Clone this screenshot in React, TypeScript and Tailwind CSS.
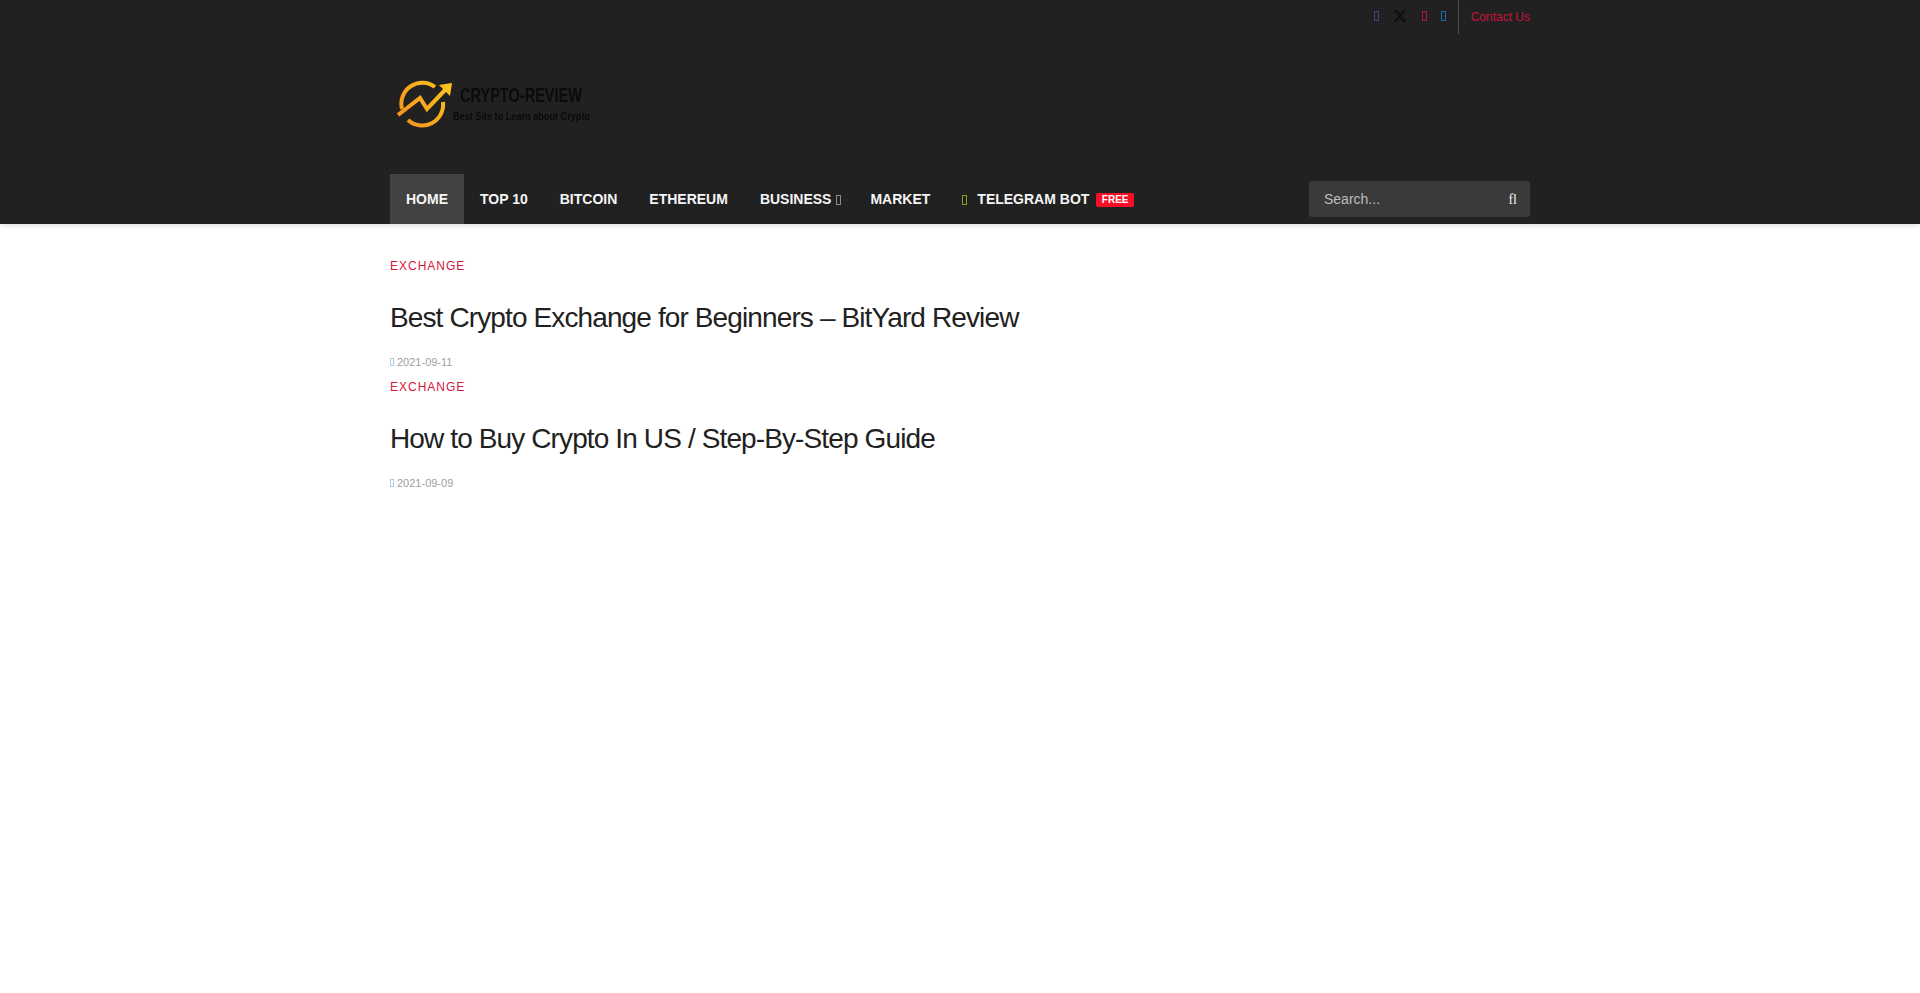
const navItems = ["TOP 10", "BITCOIN", "ETHEREUM"];

const posts = [
  { title: "Best Crypto Exchange for Beginners – BitYard Review", date: "2021-09-11" },
  { title: "How to Buy Crypto In US / Step-By-Step Guide", date: "2021-09-09" },
];

// icon font never loaded on the original page, so its icons show as empty boxes
function Tofu({ className }: { className: string }) {
  return <span className={`inline-block border ${className}`} />;
}

function Logo() {
  return (
    <svg width="270" height="52" viewBox="0 0 270 52" className="block blur-[0.5px]">
      <defs>
        <linearGradient id="logoGrad" gradientUnits="userSpaceOnUse" x1="8" y1="46" x2="60" y2="6">
          <stop offset="0" stopColor="#f5901e" />
          <stop offset="1" stopColor="#fbc41c" />
        </linearGradient>
      </defs>
      <path d="M12 31A21 21 0 0 1 45 9" fill="none" stroke="url(#logoGrad)" strokeWidth="4" />
      <path d="M53 24A21 21 0 0 1 18 42" fill="none" stroke="url(#logoGrad)" strokeWidth="4" />
      <path d="M8 37L30 20L37 31L56 11" fill="none" stroke="url(#logoGrad)" strokeWidth="4" />
      <path d="M49 7L62 5L60 18Z" fill="url(#logoGrad)" />
      <text x="70" y="24" textLength="122" lengthAdjust="spacingAndGlyphs" fontFamily="Liberation Sans" fontWeight="700" fontSize="21" fill="#0a0a0a">
        CRYPTO-REVIEW
      </text>
      <text x="63" y="42" textLength="137" lengthAdjust="spacingAndGlyphs" fontFamily="Liberation Sans" fontWeight="700" fontSize="10" fill="#0a0a0a">
        Best Site to Learn about Crypto
      </text>
    </svg>
  );
}

export default function App() {
  return (
    <div className="min-h-[993px] bg-white font-['Liberation_Sans',Arial,sans-serif]">
      <header className="bg-[#212121] shadow-[0_1px_6px_rgba(0,0,0,0.15)]">
        {/* Top bar */}
        <div className="mx-auto flex h-[34px] w-[1140px] items-center justify-end">
          <div className="mb-[2px] flex items-center">
            <Tofu className="h-[10px] w-[5px] border-[#3b4a78]" />
            <svg viewBox="0 0 24 24" className="ml-[14px] h-[14px] w-[14px]" fill="#0a0a0a">
              <path d="M18.2 2.3h3.3l-7.2 8.2 8.5 11.2h-6.7l-5.2-6.8-6 6.8H1.7l7.7-8.8L1.3 2.3h6.8l4.7 6.2zm-1.2 17.5h1.8L7 4.1H5z" />
            </svg>
            <Tofu className="ml-[15px] h-[10px] w-[5px] border-[#a81a35]" />
            <Tofu className="ml-[14px] h-[10px] w-[5px] border-[#1f6f9c]" />
          </div>
          <div className="ml-[12px] flex h-full items-center border-l border-[#4a4a4a] pl-[12px] text-[12px] text-[#c9143a]">
            Contact Us
          </div>
        </div>
        {/* Logo row */}
        <div className="mx-auto flex h-[140px] w-[1140px] items-center">
          <Logo />
        </div>
        {/* Nav */}
        <div className="mx-auto flex h-[50px] w-[1140px] items-center justify-between">
          <nav className="flex h-full items-stretch text-[14px] font-bold text-[#f5f5f5]">
            <a className="flex items-center bg-[#424242] px-4">HOME</a>
            {navItems.map((label) => (
              <a key={label} className="flex items-center px-4">
                {label}
              </a>
            ))}
            <a className="flex items-center pl-4 pr-[13px]">
              BUSINESS
              <Tofu className="ml-[5px] mt-[1px] h-[10px] w-[5px] border-[#8a8a8a]" />
            </a>
            <a className="flex items-center px-4">MARKET</a>
            <a className="flex items-center px-4">
              <Tofu className="mr-[10px] mt-[1px] h-[10px] w-[5px] border-[#8f9a2a]" />
              TELEGRAM BOT
              <span className="ml-[7px] mt-[2px] rounded-[2px] bg-[#f70d28] px-[5.5px] py-[1px] text-[10px] leading-[12px] text-white">FREE</span>
            </a>
          </nav>
          <div className="flex h-9 w-[221px] items-center justify-between rounded-[3px] bg-[#3a3a3a] pl-[15px] pr-[13px] text-[14px] text-[#bdbdbd]">
            <span>Search...</span>
            <span className="font-['Liberation_Serif',serif] text-[#eeeeee]">fl</span>
          </div>
        </div>
      </header>

      <main className="mx-auto w-[1140px] pt-[34px]">
        {posts.map((post) => (
          <article key={post.title}>
            <div className="text-[12px] leading-[16px] tracking-[1px] text-[#d1173d]">EXCHANGE</div>
            <h2 className="mt-[26px] text-[28px] leading-[36px] tracking-[-0.88px] text-[#212121]">{post.title}</h2>
            <div className="mt-[18px] mb-[9px] flex items-center text-[11px] leading-[16px] text-[#a0a0a0]">
              <Tofu className="mr-[3px] h-[8px] w-[4px] border-[#a9cfe0]" />
              {post.date}
            </div>
          </article>
        ))}
      </main>
    </div>
  );
}
